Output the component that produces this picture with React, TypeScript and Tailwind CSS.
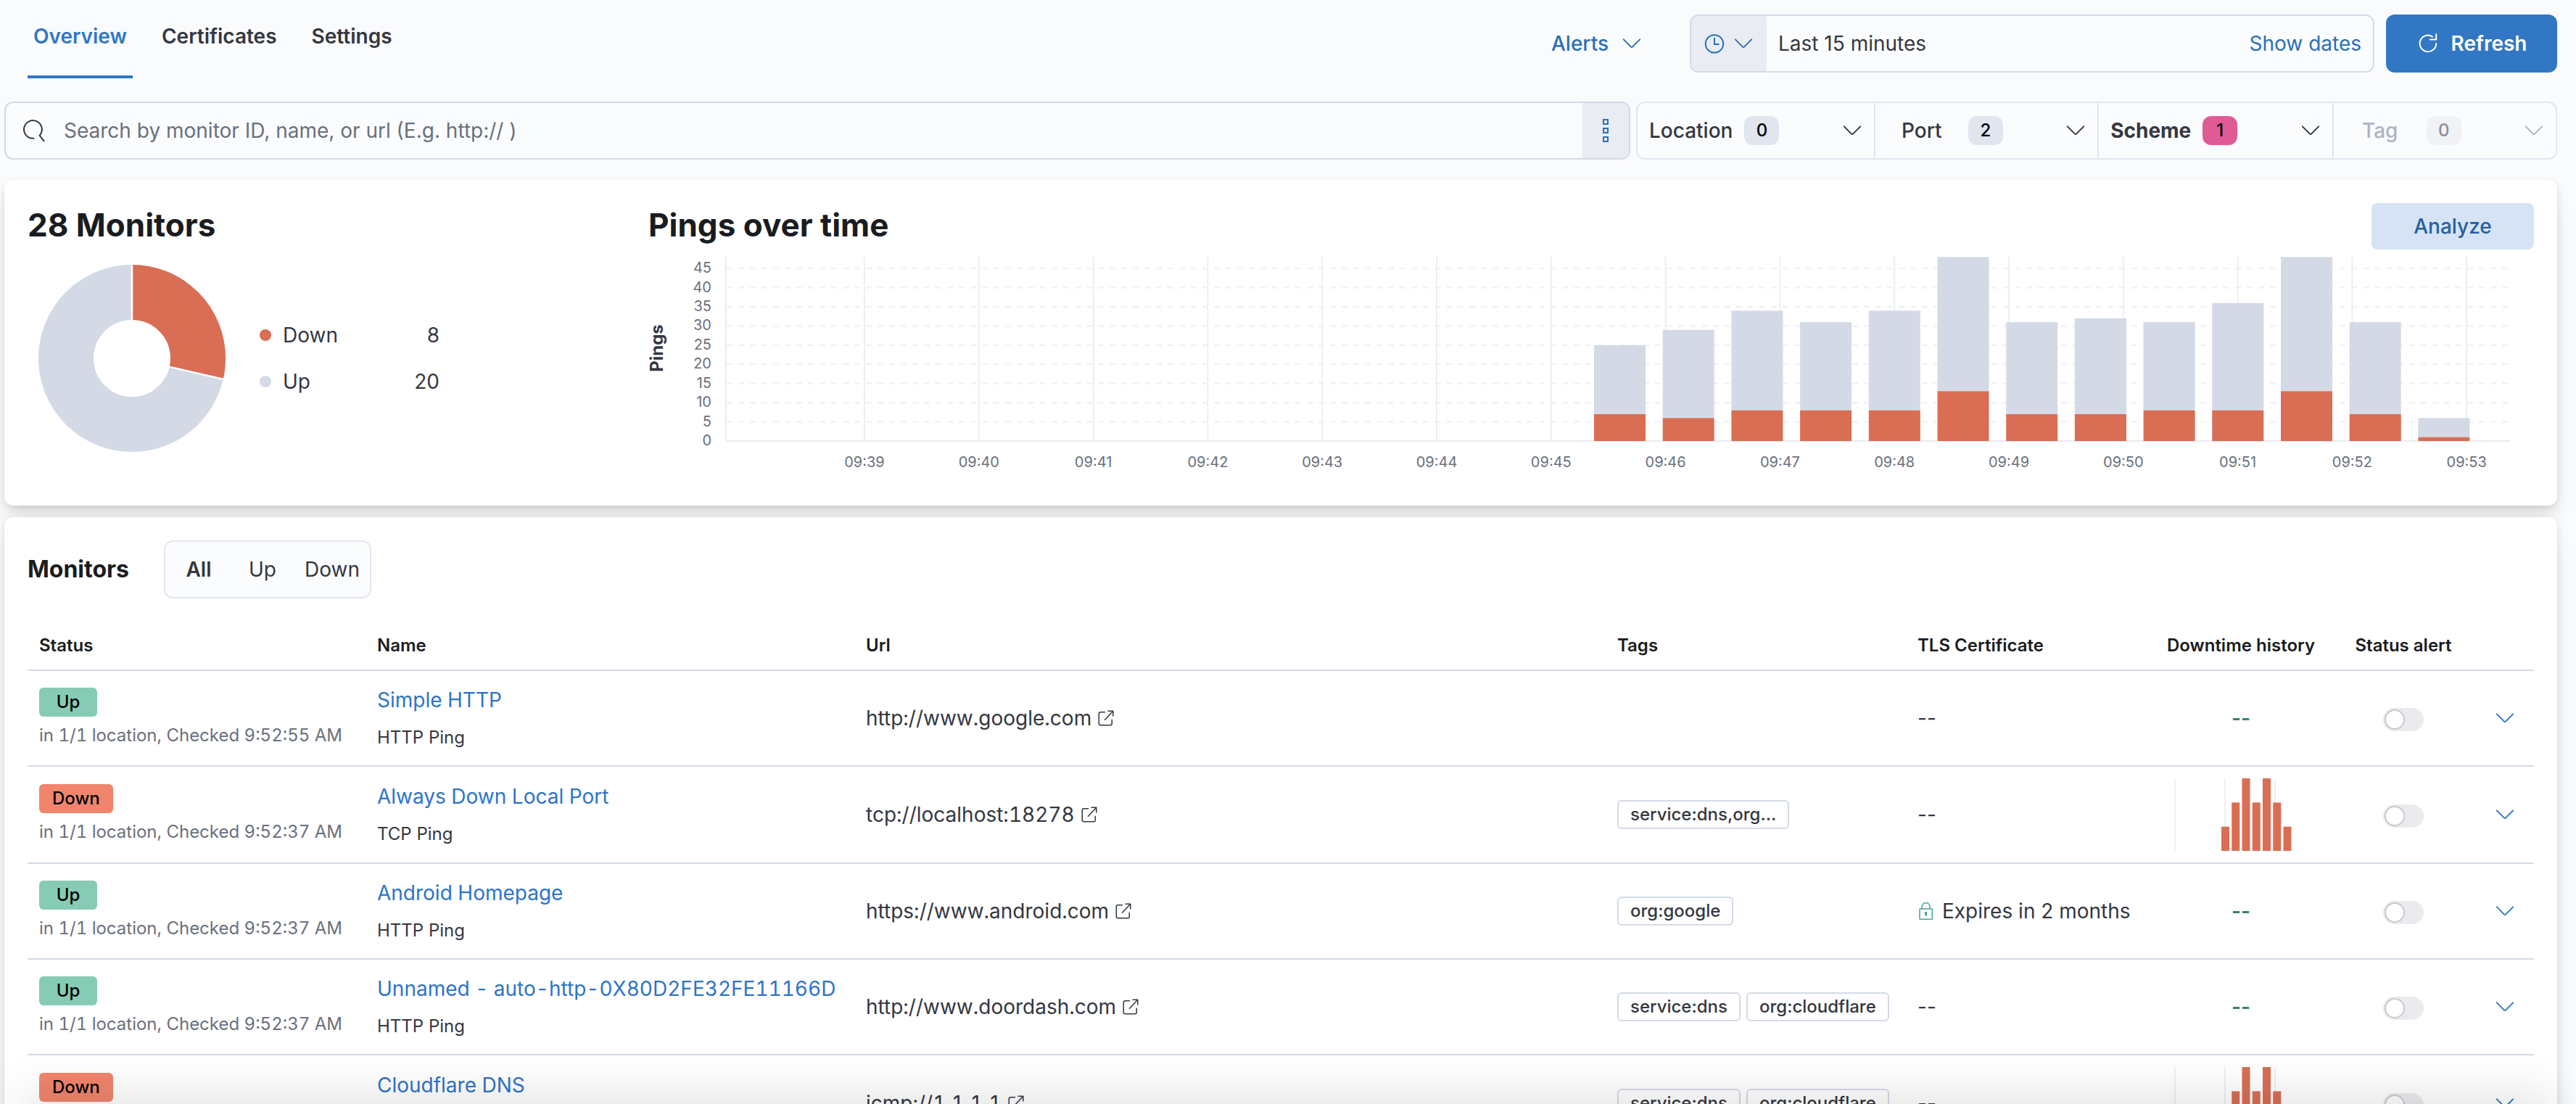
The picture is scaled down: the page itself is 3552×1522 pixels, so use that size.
import { useState } from "react";
import clsx from "clsx";

type Monitor = {
  name: string;
  type: string;
  status: "Up" | "Down";
  checked: string;
  url: string;
  tags: string[];
  tls?: string;
  downtime?: number[];
};

const monitors: Monitor[] = [
  { name: "Simple HTTP", type: "HTTP Ping", status: "Up", checked: "9:52:55 AM", url: "http://www.google.com", tags: [] },
  {
    name: "Always Down Local Port",
    type: "TCP Ping",
    status: "Down",
    checked: "9:52:37 AM",
    url: "tcp://localhost:18278",
    tags: ["service:dns,org..."],
    downtime: [1, 2, 3, 2, 3, 2, 1],
  },
  {
    name: "Android Homepage",
    type: "HTTP Ping",
    status: "Up",
    checked: "9:52:37 AM",
    url: "https://www.android.com",
    tags: ["org:google"],
    tls: "Expires in 2 months",
  },
  {
    name: "Unnamed - auto-http-0X80D2FE32FE11166D",
    type: "HTTP Ping",
    status: "Up",
    checked: "9:52:37 AM",
    url: "http://www.doordash.com",
    tags: ["service:dns", "org:cloudflare"],
  },
  {
    name: "Cloudflare DNS",
    type: "ICMP Ping",
    status: "Down",
    checked: "9:52:37 AM",
    url: "icmp://1.1.1.1",
    tags: ["service:dns", "org:cloudflare"],
    downtime: [1, 2, 3, 2, 3, 2, 1],
  },
];

// [down, total] for every 36 second bucket
const pings = [
  [7, 25],
  [6, 29],
  [8, 34],
  [8, 31],
  [8, 34],
  [13, 48],
  [7, 31],
  [7, 32],
  [8, 31],
  [8, 36],
  [13, 48],
  [7, 31],
  [1, 6],
];

const times = [
  "09:39", "09:40", "09:41", "09:42", "09:43", "09:44", "09:45", "09:46",
  "09:47", "09:48", "09:49", "09:50", "09:51", "09:52", "09:53",
];

const filters = [
  { name: "Location", count: 0 },
  { name: "Port", count: 2 },
  { name: "Scheme", count: 1, active: true },
  { name: "Tag", count: 0, disabled: true },
];

const panelShadow =
  "shadow-[0_2px_8px_-2px_rgba(0,0,0,0.1),0_5px_16px_-2px_rgba(0,0,0,0.07),0_11px_24px_-2px_rgba(0,0,0,0.06),0_30px_30px_-2px_rgba(0,0,0,0.05)]";

const ChevronIcon = ({ className = "" }: { className?: string }) => (
  <svg viewBox="0 0 16 16" className={clsx("size-8 shrink-0", className)} fill="none" stroke="currentColor" strokeLinecap="round" strokeLinejoin="round">
    <path d="M2.4 5.2 7.5 10.3a.7.7 0 0 0 1 0L13.6 5.2" />
  </svg>
);

const SearchIcon = () => (
  <svg viewBox="0 0 16 16" className="size-8 shrink-0" fill="none" stroke="currentColor" strokeLinecap="round">
    <path d="M8.2 13.4a6.2 6.2 0 1 1 4.1-2l3 3.8" />
  </svg>
);

const ClockIcon = () => (
  <svg viewBox="0 0 16 16" className="size-8 shrink-0" fill="none" stroke="currentColor">
    <circle cx="8" cy="8.2" r="6.1" />
    <path d="M8 4v4.5h3.3" />
  </svg>
);

const RefreshIcon = () => (
  <svg viewBox="0 0 16 16" className="size-8 shrink-0" fill="none" stroke="currentColor">
    <path d="M13.6 7.6A5.65 5.65 0 1 1 11.4 3.5" />
    <path d="M13.6 1.2V5.3H9" />
  </svg>
);

const DotsIcon = () => (
  <svg viewBox="0 0 16 16" className="size-8" fill="none" stroke="currentColor">
    <rect x="6.5" y="0.5" width="3" height="3" />
    <rect x="6.5" y="6.5" width="3" height="3" />
    <rect x="6.5" y="12.5" width="3" height="3" />
  </svg>
);

const ExternalIcon = () => (
  <svg viewBox="0 0 16 16" className="size-6 shrink-0" fill="none" stroke="currentColor" strokeLinecap="round" strokeLinejoin="round">
    <path d="M7 2.5H3A1.5 1.5 0 0 0 1.5 4v9A1.5 1.5 0 0 0 3 14.5h9a1.5 1.5 0 0 0 1.5-1.5V9.5M10 1.5h4.500V6M14 2 7 9.500" />
  </svg>
);

const LockIcon = () => (
  <svg viewBox="0 0 16 16" className="size-6 shrink-0 text-[#4aa796]" fill="none" stroke="currentColor">
    <rect x="2" y="6" width="11.5" height="9.5" rx="0.4" />
    <path d="M4 6V4.2a3.7 3.7 0 0 1 7.5 0V6" />
    <circle cx="7.75" cy="10" r="1.3" fill="currentColor" stroke="none" />
    <path d="M7.75 10v2.5" strokeWidth="1.6" />
  </svg>
);

const Header = () => {
  const [tab, setTab] = useState("Overview");
  return (
    <header className="flex h-[108px] items-start justify-between pl-8">
      <nav className="flex h-full gap-8">
        {["Overview", "Certificates", "Settings"].map((name) => (
          <button
            key={name}
            onClick={() => setTab(name)}
            className={clsx(
              "flex h-full items-start border-b-4 px-2 pt-7 font-semibold leading-11",
              tab === name ? "border-[#3177c4] text-[#3177c4]" : "border-transparent"
            )}
          >
            {name}
          </button>
        ))}
      </nav>
      <div className="flex items-center pt-5">
        <button className="mr-16 flex items-center gap-4 font-medium text-[#2c6fb8]">
          Alerts <ChevronIcon />
        </button>
        <div className="mr-4 flex h-20 w-[944px] overflow-hidden rounded-xl border-2 border-[#d3dae6] bg-[#fbfcfd]">
          <button aria-label="Date quick select" className="flex w-[104px] items-center justify-center gap-2 bg-[#e9edf3] text-[#2c6fb8]">
            <ClockIcon />
            <ChevronIcon />
          </button>
          <button className="flex flex-1 items-center justify-between px-4">
            Last 15 minutes
            <span className="text-[#2c6fb8]">Show dates</span>
          </button>
        </div>
        <button className="flex h-20 w-[236px] items-center justify-center gap-4 rounded-xl bg-[#3177c4] font-semibold text-white">
          <RefreshIcon /> Refresh
        </button>
      </div>
    </header>
  );
};

const FilterBar = () => (
  <div className="mt-8 flex gap-2">
    <div className="flex h-20 flex-1 items-center overflow-hidden rounded-xl border-2 border-[#d3dae6] bg-[#fbfcfd] pl-5.5">
      <SearchIcon />
      <input
        type="search"
        aria-label="Search monitors"
        placeholder="Search by monitor ID, name, or url (E.g. http:// )"
        className="h-full flex-1 bg-transparent px-6.5 outline-none placeholder:text-[#69707d]"
      />
      <button aria-label="Query options" className="flex h-full w-16 items-center justify-center bg-[#e9edf3] text-[#2c6fb8]">
        <DotsIcon />
      </button>
    </div>
    <div className="flex h-20 w-[1270px] overflow-hidden rounded-xl border-2 border-[#e3e6f0] bg-[#fbfcfd]">
      {filters.map((f) => (
        <button
          key={f.name}
          disabled={f.disabled}
          className={clsx(
            "flex flex-auto items-center gap-4 border-r-2 border-[#e0e5ee] pr-3.5 pl-4 last:border-r-0",
            f.active ? "font-bold" : "font-medium",
            f.disabled && "text-[#abb4c4]"
          )}
        >
          <span className="min-w-24">{f.name}</span>
          <span
            className={clsx(
              "flex h-10 w-12 items-center justify-center rounded-xl text-[24px] font-medium",
              f.active ? "bg-[#df5b96] text-black" : f.disabled ? "bg-[#f0f2f6] text-[#8a8d93]" : "bg-[#e0e5ee] text-black"
            )}
          >
            {f.count}
          </span>
          <ChevronIcon className="ml-auto" />
        </button>
      ))}
    </div>
  </div>
);

const Donut = () => (
  <svg viewBox="-130 -130 260 260" className="size-[260px]" role="img" aria-label="8 of 28 monitors are down">
    <circle r="91" fill="none" stroke="#d3dae6" strokeWidth="76" />
    <circle r="91" fill="none" stroke="#d96e54" strokeWidth="76" pathLength="28" strokeDasharray="8 20" transform="rotate(-90)" />
    <g stroke="#fff" strokeWidth="2.5">
      <path d="M0-50V-130" />
      <path d="M0-50V-130" transform="rotate(102.86)" />
    </g>
  </svg>
);

const Snapshot = () => (
  <div className="w-[856px] shrink-0">
    <h2 className="text-[44px] font-bold leading-15 text-[#1a1c21]">28 Monitors</h2>
    <div className="mt-6 flex items-center gap-11.5 pl-3.5">
      <Donut />
      <ul className="w-[248px]">
        {[
          { label: "Down", value: 8, dot: "bg-[#d96e54]" },
          { label: "Up", value: 20, dot: "bg-[#d3dae6]" },
        ].map((item) => (
          <li key={item.label} className="flex h-16 items-center gap-4">
            <span className={clsx("size-4 rounded-full", item.dot)} />
            {item.label}
            <span className="ml-auto">{item.value}</span>
          </li>
        ))}
      </ul>
    </div>
  </div>
);

const PingsChart = () => {
  const base = 260;
  const unit = 5.285;
  return (
    <svg viewBox="0 0 2600 310" className="w-full overflow-visible" role="img" aria-label="Pings over time">
      <text transform="translate(20 132) rotate(-90)" textAnchor="middle" fontSize="24" fontWeight="700" fill="#343741">
        Pings
      </text>
      {[0, 5, 10, 15, 20, 25, 30, 35, 40, 45].map((v) => (
        <g key={v}>
          <text x="87" y={base - v * unit + 6} textAnchor="end" fontSize="20" fill="#69707d">
            {v}
          </text>
          {v > 0 && (
            <path d={`M108 ${base - v * unit}H2566`} stroke="#eeeff3" strokeWidth="2" strokeDasharray="8 8" />
          )}
        </g>
      ))}
      <path d={`M107 6V${base}`} stroke="#eaebf0" strokeWidth="2" />
      {times.map((t, i) => {
        const x = 298 + i * 157.8;
        return (
          <g key={t}>
            <path d={`M${x} 6V${base}`} stroke="#eeeff3" strokeWidth="2" />
            <text x={x} y="296" textAnchor="middle" fontSize="20" fill="#69707d">
              {t}
            </text>
          </g>
        );
      })}
      <path d={`M107 ${base}H2567`} stroke="#eaebf0" strokeWidth="2" />
      {pings.map(([down, total], i) => (
        <g key={i}>
          <rect x={1304 + i * 94.7} y={base - total * unit} width="71" height={(total - down) * unit} fill="#d3dae6" />
          <rect x={1304 + i * 94.7} y={base - down * unit} width="71" height={down * unit} fill="#d96e54" />
        </g>
      ))}
    </svg>
  );
};

const Summary = () => (
  <section className={clsx("mt-7 flex rounded-xl bg-white px-8 pt-8 pb-[39px]", panelShadow)}>
    <Snapshot />
    <div className="flex-1">
      <div className="flex items-start justify-between">
        <h2 className="text-[44px] font-bold leading-15 text-[#1a1c21]">Pings over time</h2>
        <button className="h-16 w-56 rounded-lg bg-[#d6e3f4] font-medium text-[#255fa0]">Analyze</button>
      </div>
      <div className="mt-1">
        <PingsChart />
      </div>
    </div>
  </section>
);

const DowntimeChart = ({ values }: { values: number[] }) => (
  <svg viewBox="0 0 200 100" className="mx-auto h-[100px] w-[200px]" role="img" aria-label="Downtime history">
    <path d="M9 0V100M78 0V100M147 0V100" stroke="#eeeff3" strokeWidth="2" />
    {values.map((v, i) => (
      <rect key={i} x={73 + i * 14.25} y={100 - v * 33.3} width="11" height={v * 33.3} fill="#d96e54" />
    ))}
  </svg>
);

const Toggle = ({ label }: { label: string }) => (
  <label className="relative inline-flex h-8 w-14 align-middle">
    <input type="checkbox" role="switch" aria-label={label} className="peer size-full appearance-none rounded-full bg-[#eaebef] checked:bg-[#3177c4]" />
    <span className="pointer-events-none absolute left-0.5 top-0.5 size-7 rounded-full border-2 border-[#c9cbcd] bg-white peer-checked:translate-x-6" />
  </label>
);

const MonitorRow = ({ monitor }: { monitor: Monitor }) => (
  <tr className="h-[132px] *:border-b-2 *:border-[#d3dae6] *:px-4">
    <td>
      <span
        className={clsx(
          "flex h-10 w-fit min-w-20 items-center justify-center rounded-md px-[18px] text-[24px] font-medium text-black",
          monitor.status === "Up" ? "bg-[#86cbb4]" : "bg-[#f0856c]"
        )}
      >
        {monitor.status}
      </span>
      <div className="mt-2 whitespace-nowrap text-[24px] leading-9 text-[#69707d] tabular-nums">in 1/1 location, Checked {monitor.checked}</div>
    </td>
    <td>
      <a href="#" className="block whitespace-nowrap leading-10 text-[#2c74c9] tabular-nums">
        {monitor.name}
      </a>
      <div className="mt-3.5 text-[24px] leading-9">{monitor.type}</div>
    </td>
    <td>
      <a href={monitor.url} className="flex items-center gap-2 tabular-nums">
        {monitor.url} <ExternalIcon />
      </a>
    </td>
    <td>
      <div className="flex gap-2">
        {monitor.tags.map((tag) => (
          <span key={tag} className="flex h-10 items-center rounded-md border-2 border-[#d3dae6] px-4 text-[24px] font-medium whitespace-nowrap">
            {tag}
          </span>
        ))}
      </div>
    </td>
    <td>
      {monitor.tls ? (
        <span className="flex items-center gap-2.5 whitespace-nowrap">
          <LockIcon /> {monitor.tls}
        </span>
      ) : (
        "--"
      )}
    </td>
    <td className="text-center font-semibold text-[#2f8375]">
      {monitor.downtime ? (
        <div className="py-4">
          <DowntimeChart values={monitor.downtime} />
        </div>
      ) : (
        "--"
      )}
    </td>
    <td className="text-center">
      <Toggle label={`Status alert for ${monitor.name}`} />
    </td>
    <td>
      <button aria-label={`Expand ${monitor.name}`} className="ml-6 block text-[#3177c4]">
        <ChevronIcon />
      </button>
    </td>
  </tr>
);

const MonitorList = () => {
  const [filter, setFilter] = useState("All");
  const rows = monitors.filter((m) => filter === "All" || m.status === filter);

  return (
    <section className={clsx("mt-4 rounded-xl bg-white p-8", panelShadow)}>
      <div className="flex items-center gap-12">
        <h3 className="text-[32px] font-bold text-[#1a1c21]">Monitors</h3>
        <div className="flex h-20 rounded-xl border-2 border-[#e3e6f0] bg-[#fbfcfd] pl-0.5">
          {["All", "Up", "Down"].map((name) => (
            <button
              key={name}
              onClick={() => setFilter(name)}
              className={clsx("min-w-22 px-3.5", filter === name ? "font-semibold" : "font-normal")}
            >
              {name}
            </button>
          ))}
        </div>
      </div>
      <table className="mt-8 w-full table-fixed border-separate border-spacing-0">
        <thead>
          <tr className="h-[68px] text-left text-[24px] text-[#1a1c21] *:whitespace-nowrap *:border-b-2 *:border-[#d3dae6] *:px-4 *:font-semibold">
            <th className="w-[466px]">Status</th>
            <th className="w-[674px]">Name</th>
            <th>Url</th>
            <th className="w-[414px]">Tags</th>
            <th className="w-[322px]">TLS Certificate</th>
            <th className="w-[280px] text-center">Downtime history</th>
            <th className="w-[168px] text-center">Status alert</th>
            <th className="w-24" aria-label="Details" />
          </tr>
        </thead>
        <tbody>
          {rows.map((m) => (
            <MonitorRow key={m.name} monitor={m} />
          ))}
        </tbody>
      </table>
    </section>
  );
};

const App = () => (
  <div className="relative h-screen overflow-hidden bg-[#fafbfd] pr-[26px] pl-1.5 font-['Inter',sans-serif] text-[28px] leading-10 text-[#343741]">
    <Header />
    <FilterBar />
    <Summary />
    <MonitorList />
    <div className="pointer-events-none absolute inset-x-10 top-full h-20 shadow-[0_0_70px_10px_rgba(0,0,0,0.12)]" />
  </div>
);

export default App;
